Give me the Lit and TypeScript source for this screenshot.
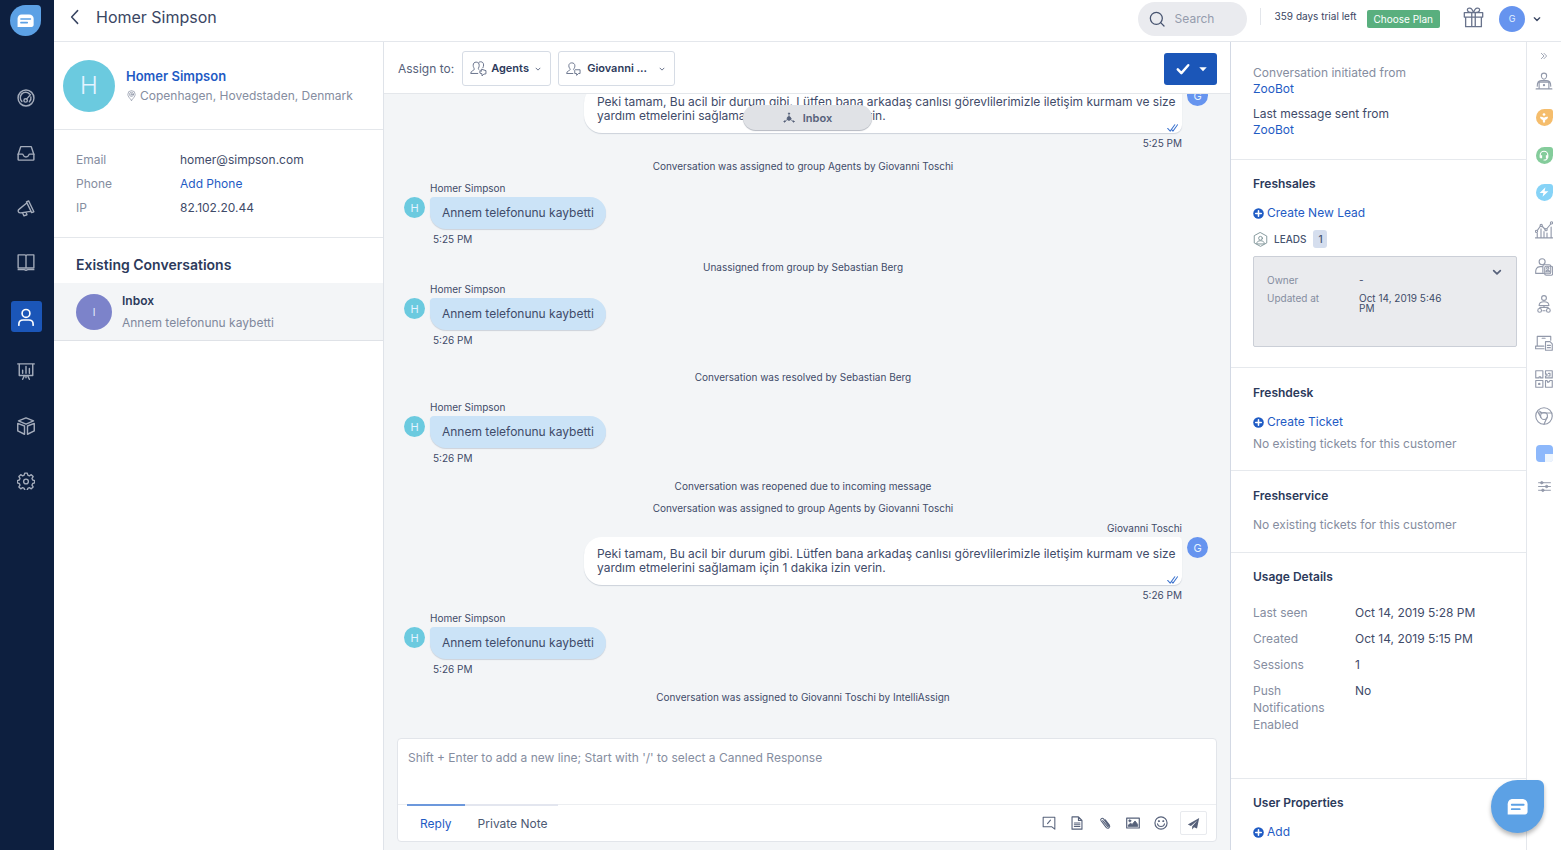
import { LitElement, html, svg, css, nothing } from "lit";
import { customElement, property } from "lit/decorators.js";

const glyphs: Record<string, unknown> = {
  back: svg`<path d="M15.500 3.500 7.500 12l8 8.500" stroke-width="2"/>`,
  pin: svg`<path d="M12 22.500C7.500 17.500 4 13.500 4 9.500a8 8 0 0 1 16 0c0 4-3.500 8-8 13z"/><circle cx="12" cy="9.500" r="4.500"/><circle cx="12" cy="9.500" r="1.500"/>`,
  gauge: svg`<circle cx="12" cy="12" r="10.600" stroke-width="1.900"/><path d="M6.500 16.500A7 7 0 0 1 16.500 6.500M18.500 10.500a7 7 0 0 1-2 6.500" stroke-width="1.900"/><circle cx="11.500" cy="15.200" r="2.300" stroke-width="1.900"/><path d="m13 13.200 5-5.700" stroke-width="1.900"/>`,
  tray: svg`<path d="M1.500 14v6.500a1 1 0 0 0 1 1h19a1 1 0 0 0 1-1V14L19 3.500H5z" stroke-width="1.900"/><path d="M1.500 13.500H7c.6 0 1 .4 1.200 1 .6 1.700 2 2.800 3.800 2.800s3.200-1.100 3.800-2.800c.2-.6.6-1 1.200-1h5.500" stroke-width="1.900"/>`,
  horn: svg`<path d="M15.500 2.500 22.500 17l-3 1.200L12.600 3.800zM13 5.200 3 13.500c-1.300 1-1.700 2.200-1.200 3.400s1.700 1.600 3.200 1.500L18 16.500M7.500 18.500l1.800 4 4-1.500L12 17.500" stroke-width="1.800"/>`,
  book: svg`<path d="M1.500 2.500h9c.9 0 1.500.6 1.500 1.500v16H1.500zM22.500 2.500h-9c-.9 0-1.500.6-1.500 1.500v16h10.500zM1.500 22.200h8l2.500.8 2.500-.8h8" stroke-width="1.800"/>`,
  person: svg`<circle cx="12" cy="7.200" r="5.200" stroke-width="2.200"/><path d="M2.500 23v-1.500c0-3.600 2.600-5.500 5.800-5.500h7.400c3.200 0 5.800 1.900 5.800 5.500V23" stroke-width="2.200"/>`,
  board: svg`<path d="M1 2.500h22M3 2.500V18h18V2.500M10 18l-2.500 5M14 18l2.500 5M12 18v3M7.500 15v-4M12 15V6M16.500 15V8.500" stroke-width="1.900"/>`,
  cube: svg`<path d="m12 1.200 10 4L12 9.500 2 5.200zM1 8.500l9 3.500v11L1 18.500zM23 8.500 14 12v11l9-4.500z" stroke-width="1.900"/>`,
  gear: svg`<path d="M10.300 1.500h3.400l.7 2.700 2.100.9 2.500-1.500 2.500 2.500-1.500 2.500.9 2.100 2.600.7v3.200l-2.600.7-.9 2.100 1.500 2.500-2.500 2.500-2.500-1.500-2.100.9-.7 2.700h-3.400l-.7-2.700-2.100-.9L5 22.400l-2.500-2.500L4 17.400l-.9-2.100-2.600-.7v-3.200l2.600-.7.900-2.100-1.500-2.500L5 3.600l2.500 1.500 2.100-.9z" stroke-width="1.800"/><circle cx="12" cy="12.700" r="3.200" stroke-width="1.800"/>`,
  search: svg`<circle cx="11" cy="11" r="9" stroke-width="1.900"/><path d="m17.500 17.500 5 5" stroke-width="1.900"/>`,
  gift: svg`<path d="M1.500 6.500h21v5h-21zM3 11.500h18v11H3zM10 6.500v16M14 6.500v16M11 6.500C7 6.500 5 5 5 3.200 5 1 8.500.5 10 2.500c.8 1 1.400 2.400 2 4 .6-1.600 1.200-3 2-4 1.500-2 5-1.500 5 .7 0 1.800-2 3.300-6 3.300"/>`,
  chevron: svg`<path d="m4 8.500 8 8 8-8" stroke-width="4"/>`,
  group: svg`<path d="M12.500 13.500c-.9-.5-.9-1.100-.5-2 .6-1.200 1-2.300 1-4 0-3-1.800-4.500-4.300-4.500S4.500 4.500 4.500 7.500c0 2.800 1.500 3.700 1.500 5.500 0 2.200-5 2-5 6h10M12 4c.7-1 1.700-1.500 3-1.500 2.700 0 4.200 1.800 4.200 4.500 0 1.600-.4 2.700-1 4" stroke-width="1.400"/><path d="M16 15.500V13l6.500 2v4.500l-3 .5-2.500 2.500v-3l-3-1v-3z" stroke-width="1.400"/>`,
  agent: svg`<path d="M13 15c-.8-.4-1-1-.7-2 .8-1.300 1.900-2.600 1.900-5.300C14.200 4.500 12 3 9.300 3S4.500 4.500 4.500 7.700c0 3.300 2.200 4.300 2.200 5.800 0 2.200-5.700 2-5.700 6.500h10M15 14h7.500v6H20l-3 3v-3h-3v-4" stroke-width="1.500"/>`,
  check: svg`<path d="m3 12.500 6.200 6.500L21 5.500" stroke-width="4.200"/>`,
  caret: svg`<path d="M3 8h18l-9 9.500z" fill="currentColor" stroke="none"/>`,
  hub: svg`<circle cx="12" cy="13" r="3.800" fill="currentColor"/><path d="M12 10V5M9 15l-4.500 3M15 15l4.500 3"/><circle cx="12" cy="3" r="1.300" fill="currentColor"/><circle cx="3" cy="19" r="1.300" fill="currentColor"/><circle cx="21" cy="19" r="1.300" fill="currentColor"/>`,
  ticks: svg`<path d="m1.500 14 5.500 6L17 6M10.500 17l2.500 3L23 6" stroke-width="2.200"/>`,
  plus: svg`<circle cx="12" cy="12" r="11.500" fill="currentColor" stroke="none"/><path d="M12 6v12M6 12h12" stroke="#fff" stroke-width="3.400"/>`,
  lead: svg`<path d="m12 1 10 5.500v11L12 23 2 17.500v-11z"/><circle cx="12" cy="10" r="3"/><path d="M6 18.500c0-3 2-4.500 6-4.500s6 1.500 6 4.500z"/>`,
  canned: svg`<path d="M2 2h20v20.500L17 18.500H2z" stroke-width="1.800"/><path d="m9.500 13 5-6" stroke-width="1.800"/>`,
  doc: svg`<path d="M3.500 1.500h11l6 6v15h-17zM14.500 1.500v6h6M7.500 12h9.500M7.500 15h9.500M7.500 18h9.500" stroke-width="1.900"/>`,
  clip: svg`<path d="m8 8 8 9.500c1 1.200 2.600-.1 1.700-1.400L9.500 5C7.200 2.200 3.200 5.200 5.200 8.200l8.800 11.300c3 3.600 8-.4 5.300-4.300L12.500 6.500" stroke-width="1.800"/>`,
  image: svg`<path d="M1.200 3.500h21.600v17H1.200z" stroke-width="2"/><circle cx="6.500" cy="8.200" r="1.700" fill="currentColor"/><path d="M4 17.500v-2l4-3 2.500 2 5-6 4.500 6v3z" fill="currentColor"/>`,
  smile: svg`<circle cx="12" cy="12" r="10.400" stroke-width="2"/><path d="M6 13.500c1 6 11 6 12 0" stroke-width="1.800"/><circle cx="8.300" cy="8.800" r=".9" fill="currentColor"/><circle cx="15.700" cy="8.800" r=".9" fill="currentColor"/>`,
  plane: svg`<path d="M22.500 2 1.500 14l5.800 2.500L19 6.500l-9.500 11V23l3.500-4 5.500 2.300z" fill="currentColor" stroke="none"/>`,
  more: svg`<path d="m4 4 8 8-8 8M12 4l8 8-8 8" stroke-width="2.600"/>`,
  laptop: svg`<path d="M12 1.500c2.300 0 3.500 1.500 3.500 3.500S14 9.500 12 9.500 8.500 7 8.500 5 9.700 1.500 12 1.500z"/><path d="M5.500 21.500v-8h13v8M1.500 22.500h21M3 19c0-5 1-7.500 5-7.500h8c4 0 5 2.500 5 7.500"/><circle cx="12" cy="17.500" r=".8" fill="currentColor"/>`,
  sales: svg`<circle cx="12" cy="6" r="2.300" fill="#fff" stroke="none"/><path d="M5 10c3 0 5 .8 7 1.500 2-.7 4-1.500 7-1.500-.5 3-2.500 5-5 5.300V18L12 21l-2-3v-2.700C7.500 15 5.500 13 5 10z" fill="#fff" stroke="none"/>`,
  headset: svg`<path d="M5.500 16v-4a6.500 6.500 0 0 1 13 0v4M12 20.500h3l2.500-2.500" stroke="#fff" stroke-width="2"/><path d="M5.500 12.500h3.300v5H5.500zM15.200 12.500h3.300v5h-3.300z" fill="#fff" stroke="none"/>`,
  bolt: svg`<path d="M14.500 4 4.500 13.500H11L9.500 20l10-9.500H13z" fill="#fff" stroke="none"/>`,
  chart: svg`<path d="M.5 22.500h23M3 22v-6M8 22V10.500M12 22v-8M16 22v-6M21.500 22V8M3.200 12.500 7 7M9.500 7l4 4M16 10l5-6"/><circle cx="8.300" cy="6" r="1.500"/><circle cx="14.700" cy="11.500" r="1.500"/><circle cx="22" cy="2.500" r="1.500"/><circle cx="2" cy="13.800" r="1.500"/>`,
  profile: svg`<circle cx="9.500" cy="5" r="4"/><path d="M10 20.500H1C.5 15 2 11.500 7 11.500h3"/><rect x="10.500" y="9" width="10.500" height="12" rx="2"/><rect x="13" y="11" width="10.500" height="12" rx="2"/><circle cx="17" cy="13.500" r="1.500"/><path d="M14.500 18.500c0-3 5-3 5 0z"/>`,
  people: svg`<circle cx="12" cy="4" r="3.200"/><path d="M5.500 14c0-3.500 2-5 6.500-5s6.500 1.500 6.500 5zM12 14v2.500M6.500 18v-1.500h11V18"/><circle cx="6.200" cy="20.500" r="2.500"/><circle cx="17.800" cy="20.500" r="2.500"/><path d="M10.500 21h3"/>`,
  device: svg`<path d="M3 17.500v-13h18v5M.8 17.500h11M.8 17.500V21H12M9.500 7h4M14 11.500h6l3 3v8.500h-9zM16.500 16.500h4M16.500 19.500h4"/>`,
  puzzle: svg`<path d="M1 1h9.500v9.500H7.500V9h-2v1.500H1zM14 1h9v9.500h-9V8h2V5.500h-2zM18 4.500h2V8h-2M1 14h9.500v9H1zM14 14h2l1 2.500 2-1L20 14h3v9h-9z"/><circle cx="5.700" cy="18.500" r=".9" fill="currentColor"/>`,
  chrome: svg`<circle cx="12" cy="12" r="11"/><circle cx="12" cy="12" r="4.600"/><path d="M9.500 8h12.700M8 14 3.300 5.500M16 14l-4 9M6 5.500l3.500 2.500M9.500 8H5"/>`,
  sliders: svg`<path d="M1 5h22M1 12h22M1 19h22" stroke-width="1.800"/><circle cx="7" cy="5" r="2.300" fill="currentColor"/><circle cx="16" cy="12" r="2.300" fill="currentColor"/><circle cx="9" cy="19" r="2.300" fill="currentColor"/>`,
  bubble: svg`<path d="M6.500 3.500h10.500c4 0 6.500 2.500 6.500 6v8.500c0 1.700-1 3-3 3H.8V9.500c0-3.500 2.200-6 5.700-6z" fill="#fff" stroke="none"/><path d="M5.500 10h13.500M5.500 15h9" stroke="#5ca1e5" stroke-width="2.200"/>`,
};

const icon = (name: string, size: number) => html`<svg
  width=${size} height=${size} viewBox="0 0 24 24" fill="none" stroke="currentColor"
  stroke-width="1.500" stroke-linecap="round" stroke-linejoin="round" aria-hidden="true"
>${glyphs[name]}</svg>`;

const base = css`
  * { box-sizing: border-box; }
  svg { display: block; flex: none; }
  button { font: inherit; color: inherit; background: none; border: 0; padding: 0; margin: 0; cursor: pointer; }
  button, .center { display: grid; place-items: center; }
  a { color: #1f5bc4; text-decoration: none; }
  h1, h2, h3, p, dl, dd, ul { margin: 0; padding: 0; }
  .avatar { display: grid; place-items: center; flex: none; border-radius: 50%; color: #e4f3ff; }
`;

@customElement("nav-rail")
class NavRail extends LitElement {
  static styles = [base, css`
    :host { display: block; background: #0d1f3f; color: #a4acbb; padding-top: 5px; }
    .logo { width: 31px; height: 31px; margin: 0 auto 35px 10px; background: #5ca1e5; border-radius: 50% 4px 50% 50%; }
    .items { display: grid; grid-auto-rows: 1fr; height: 437px; justify-items: center; align-items: center; padding-left: 1px; padding-right: 3px; }
    .items button { width: 31px; height: 31px; border-radius: 3px; }
    .items .active { background: #1b56b8; color: #fff; }
  `];
  render() {
    const items = [["gauge", "Dashboard"], ["tray", "Inbox"], ["horn", "Campaigns"], ["book", "FAQs"], ["person", "People"], ["board", "Reports"], ["cube", "Apps"], ["gear", "Settings"]];
    return html`<div class="logo center">${icon("bubble", 17)}</div>
      <nav class="items">${items.map(([g, label]) => html`
        <button class=${g === "person" ? "active" : ""} aria-label=${label}>${icon(g, 18)}</button>`)}</nav>`;
  }
}

@customElement("top-bar")
class TopBar extends LitElement {
  static styles = [base, css`
    :host { display: flex; align-items: center; height: 42px; border-bottom: 1px solid #e4e7ec; padding: 0 20px 8px 12px; color: #3a4663; }
    h1 { font-size: 16px; font-weight: 400; margin-left: 12px; flex: 1; }
    .search { display: flex; align-items: center; gap: 10px; width: 109px; height: 34px; border-radius: 17px; background: #eaebef; padding-left: 11px; margin-top: 4px; color: #46536f; }
    .search input { font: inherit; font-size: 12px; border: 0; background: none; padding: 0; width: 60px; outline: 0; color: inherit; }
    .search input::placeholder { color: #959cad; opacity: 1; }
    .trial { border-left: 1px solid #e3e6eb; margin-left: 13px; padding-left: 14px; font-size: 10px; line-height: 17px; }
    .plan { background: #59af7e; color: #fff; border-radius: 2px; height: 18px; padding: 0 7px; margin: 4px 23px 0 10px; font-size: 10px; }
    .gift { color: #69738c; margin-top: 2px; }
    .avatar { width: 26px; height: 26px; font-size: 9px; background: #6694ef; margin: 4px 8px 0 15px; }
    .account { margin-top: 4px; }
  `];
  render() {
    return html`<button aria-label="Back">${icon("back", 18)}</button>
      <h1>Homer Simpson</h1>
      <label class="search">${icon("search", 16)}<input type="search" placeholder="Search" aria-label="Search" /></label>
      <span class="trial">359 days trial left</span>
      <button class="plan">Choose Plan</button>
      <button class="gift" aria-label="What's new">${icon("gift", 21)}</button>
      <span class="avatar">G</span>
      <button class="account" aria-label="Account menu">${icon("chevron", 8)}</button>`;
  }
}

@customElement("contact-panel")
class ContactPanel extends LitElement {
  static styles = [base, css`
    :host { display: block; border-right: 1px solid #dfe3e9; background: #fff; font-size: 12px; color: #3f4b69; }
    .head { display: flex; align-items: center; gap: 11px; height: 88px; padding: 0 9px; border-bottom: 1px solid #e4e7eb; }
    .head .avatar { width: 52px; height: 52px; background: #6bcadf; font-size: 24px; font-weight: 300; }
    h2 { font-size: 13px; font-weight: 600; line-height: 20px; }
    .place { display: flex; align-items: center; gap: 3px; color: #858da0; line-height: 20px; }
    .facts { display: grid; grid-template-columns: 104px 1fr; height: 108px; padding: 18px 22px 0; grid-auto-rows: 24px; align-items: center; border-bottom: 1px solid #e4e7eb; }
    dt { color: #858da0; }
    h3 { font-size: 14px; font-weight: 600; line-height: 45px; padding: 4px 22px 0; height: 45px; color: #2c3a5b; }
    .row { display: flex; align-items: center; gap: 10px; height: 58px; padding: 0 22px; background: #f3f5f7; border-bottom: 1px solid #dfe2e7; color: inherit; }
    .row .avatar { width: 36px; height: 36px; background: #7c83ca; font-size: 10px; }
    .row b { display: block; font-weight: 600; line-height: 22px; color: #2c3a5b; }
    .row span span { color: #7f889c; line-height: 22px; }
    .facts dd, .facts dt { line-height: 24px; }
  `];
  render() {
    return html`<div class="head"><span class="avatar">H</span><div>
        <h2><a href="#contact">Homer Simpson</a></h2>
        <p class="place">${icon("pin", 11)}Copenhagen, Hovedstaden, Denmark</p></div></div>
      <dl class="facts"><dt>Email</dt><dd>homer@simpson.com</dd>
        <dt>Phone</dt><dd><a href="#phone">Add Phone</a></dd>
        <dt>IP</dt><dd>82.102.20.44</dd></dl>
      <h3>Existing Conversations</h3>
      <a class="row" href="#inbox"><span class="avatar">I</span><span><b>Inbox</b><span>Annem telefonunu kaybetti</span></span></a>`;
  }
}

interface Entry { kind: "in" | "out" | "event"; text: string; time?: string; wide?: boolean }

const LONG = "Peki tamam, Bu acil bir durum gibi. Lütfen bana arkadaş canlısı görevlilerimizle iletişim kurmam ve size yardım etmelerini sağlamam için 1 dakika izin verin.";
const LOST = "Annem telefonunu kaybetti";
const entries: Entry[] = [
  { kind: "out", text: LONG, time: "5:25 PM" },
  { kind: "event", text: "Conversation was assigned to group Agents by Giovanni Toschi" },
  { kind: "in", text: LOST, time: "5:25 PM" },
  { kind: "event", text: "Unassigned from group by Sebastian Berg" },
  { kind: "in", text: LOST, time: "5:26 PM" },
  { kind: "event", text: "Conversation was resolved by Sebastian Berg", wide: true },
  { kind: "in", text: LOST, time: "5:26 PM" },
  { kind: "event", text: "Conversation was reopened due to incoming message" },
  { kind: "event", text: "Conversation was assigned to group Agents by Giovanni Toschi" },
  { kind: "out", text: LONG, time: "5:26 PM" },
  { kind: "in", text: LOST, time: "5:26 PM" },
  { kind: "event", text: "Conversation was assigned to Giovanni Toschi by IntelliAssign" },
];

@customElement("chat-entry")
class ChatEntry extends LitElement {
  @property({ attribute: false }) entry!: Entry;
  static styles = [base, css`
    :host { display: block; flex: none; font-size: 12px; color: #3f4b69; }
    .event { text-align: center; font-size: 10px; line-height: 22px; padding-right: 8px; }
    .wide { padding: 9px 8px 8px 0; }
    .in, .out { display: grid; column-gap: 5px; }
    .in { grid-template-columns: 21px auto; justify-content: start; padding: 3px 0 7px 20px; }
    .out { grid-template-columns: minmax(0, 598px) 21px; justify-content: end; justify-items: end; padding: 1px 22px 2px 0; }
    .in .name, .in .bubble, .in time { grid-column: 2; }
    .out .name, .out .bubble, .out time { grid-column: 1; }
    .name { font-size: 10px; line-height: 17px; }
    time { font-size: 10px; line-height: 20px; }
    .in time { padding-left: 3px; }
    .avatar { width: 21px; height: 21px; font-size: 11px; grid-row: 2; }
    .in .avatar { background: #6bcadf; grid-column: 1; }
    .out .avatar { background: #6694ef; grid-column: 2; }
    .bubble { position: relative; line-height: 14px; box-shadow: 0 1px 1px #ccd2da; }
    .in .bubble { background: #cbe3f7; border-radius: 4px 16px 16px 16px; padding: 9px 12px; justify-self: start; }
    .out .bubble { background: #fff; border-radius: 18px 4px 8px 18px; padding: 10px 5px 10px 13px; }
    .seen { position: absolute; right: 4px; bottom: 0; color: #3d74cf; }
  `];
  render() {
    const e = this.entry;
    if (e.kind === "event") return html`<p class="event ${e.wide ? "wide" : ""}">${e.text}</p>`;
    const out = e.kind === "out";
    return html`<div class=${e.kind}>
      <span class="name">${out ? "Giovanni Toschi" : "Homer Simpson"}</span>
      <span class="avatar">${out ? "G" : "H"}</span>
      <p class="bubble">${e.text}${out ? html`<span class="seen">${icon("ticks", 11)}</span>` : nothing}</p>
      <time>${e.time}</time></div>`;
  }
}

@customElement("chat-panel")
class ChatPanel extends LitElement {
  static styles = [base, css`
    :host { display: flex; flex-direction: column; min-width: 0; min-height: 0; background: #f3f5f7; font-size: 12px; color: #3f4b69; }
    .bar { display: flex; align-items: center; height: 52px; flex: none; background: #fff; padding: 2px 13px 0 14px; border-bottom: 1px solid #e4e7eb; }
    .bar > span { color: #56617a; margin-right: 8px; }
    .pick { display: flex; align-items: center; height: 35px; border: 1px solid #d6dce5; border-radius: 3px; margin-right: 7px; padding: 0 9px 0 7px; color: #69738c; }
    .pick select { appearance: none; font: inherit; font-size: 11px; font-weight: 600; border: 0; background: none; padding: 0 6px 2px 4px; margin: 0; color: #2c3a5b; outline: 0; }
    .pick.agent select { padding-right: 12px; padding-left: 6px; }
    .resolve { display: flex; margin-left: auto; background: #1b56b8; border-radius: 3px; color: #fff; height: 32px; }
    .resolve button { padding: 0 4px; height: 32px; }
    .resolve button:first-child { padding-left: 12px; }
    .resolve button:last-child { padding-right: 9px; }
    .stream { position: relative; flex: 1; min-height: 0; overflow: hidden; display: flex; flex-direction: column; justify-content: flex-end; padding-bottom: 30px; }
    .tag { position: absolute; top: 11px; left: 50%; margin-left: -64px; width: 129px; height: 25px; border-radius: 13px; background: #e0e2e6; box-shadow: 0 1px 1px #b5b9c1; display: flex; align-items: center; justify-content: center; gap: 8px; font-size: 11px; font-weight: 600; color: #56617a; }
    .composer { margin: 0 13px 8px; border: 1px solid #e2e5ea; border-radius: 4px; background: #fff; flex: none; }
    textarea { display: block; width: 100%; height: 65px; border: 0; padding: 11px 10px; resize: none; font: inherit; line-height: 15px; outline: 0; background: none; color: inherit; }
    textarea::placeholder { color: #858da0; opacity: 1; }
    .tools { display: flex; align-items: center; height: 37px; border-top: 1px solid #eceef1; padding: 0 9px; color: #56617a; }
    .tab { height: 37px; margin-top: -2px; border-top: 2px solid #e3e6ef; color: #4d5973; padding: 0 10px 0 13px; }
    .tab.on { border-color: #6c98dc; color: #1f5bc4; padding: 0 13px; }
    .acts { display: flex; align-items: center; margin-left: auto; gap: 14px; }
    .send { width: 27px; height: 24px; border: 1px solid #e8eaee; border-radius: 2px; margin-left: -2px; }
  `];
  render() {
    return html`<div class="bar"><span>Assign to:</span>
        <label class="pick">${icon("group", 17)}<select aria-label="Group"><option>Agents</option></select>${icon("chevron", 6)}</label>
        <label class="pick agent">${icon("agent", 15)}<select aria-label="Agent"><option>Giovanni ...</option></select>${icon("chevron", 6)}</label>
        <div class="resolve"><button aria-label="Resolve">${icon("check", 14)}</button><button aria-label="More">${icon("caret", 10)}</button></div></div>
      <div class="stream">${entries.map((e) => html`<chat-entry .entry=${e}></chat-entry>`)}
        <div class="tag">${icon("hub", 12)}Inbox</div></div>
      <form class="composer"><textarea aria-label="Message" placeholder="Shift + Enter to add a new line; Start with '/' to select a Canned Response"></textarea>
        <div class="tools"><button type="button" class="tab on">Reply</button><button type="button" class="tab">Private Note</button>
          <div class="acts">
            ${[["canned", "Canned response"], ["doc", "FAQ"], ["clip", "Attach"], ["image", "Image"], ["smile", "Emoji"]].map(([g, l]) => html`<button type="button" aria-label=${l}>${icon(g, 14)}</button>`)}
            <button type="button" class="send" aria-label="Send">${icon("plane", 13)}</button></div></div></form>`;
  }
}

@customElement("detail-panel")
class DetailPanel extends LitElement {
  static styles = [base, css`
    :host { display: block; min-height: 0; overflow: hidden; border-left: 1px solid #d3d9e4; font-size: 12px; color: #3f4b69; background: #fff; }
    section { padding: 16px 9px 0 22px; border-bottom: 1px solid #e6e9ed; }
    section:last-child { border: 0; }
    h2 { font-size: 12px; font-weight: 600; line-height: 17px; color: #2c3a5b; }
    .source { height: 118px; padding-top: 23px; line-height: 16px; }
    .source p + p { margin-top: 9px; }
    .source a { display: block; }
    .muted, dt { color: #858da0; }
    .add { display: flex; align-items: center; gap: 3px; line-height: 18px; margin-top: 12px; }
    .sales { height: 208px; padding-top: 15px; }
    .leads { display: flex; align-items: center; height: 18px; margin-top: 8px; font-size: 10px; font-weight: 500; color: #46536f; }
    .leads svg { color: #7f9499; margin-right: 6px; }
    .leads b { background: #d5deee; border-radius: 3px; width: 14px; line-height: 18px; text-align: center; margin-left: 7px; font-weight: 500; }
    .card { position: relative; height: 91px; margin-top: 8px; border: 1px solid #cbcfd7; border-radius: 2px; background: #eaebee; padding: 14px 13px; display: grid; grid-template-columns: 92px 96px; align-content: start; font-size: 10px; }
    .card dt { line-height: 18px; }
    .card dd { line-height: 18px; }
    .card .date { line-height: 10px; padding-top: 4px; }
    .card button { position: absolute; top: 10px; right: 14px; color: #56617a; }
    .desk { height: 103px; }
    .desk p { margin-top: 4px; line-height: 18px; }
    .service { height: 82px; }
    .service p { margin-top: 12px; line-height: 18px; }
    .usage { height: 226px; padding-top: 15px; }
    .usage dl { display: grid; grid-template-columns: 82px 1fr; column-gap: 20px; row-gap: 9px; line-height: 17px; margin-top: 19px; }
    .props { padding-top: 15px; }
  `];
  render() {
    return html`<section class="source"><p><span class="muted">Conversation initiated from</span><a href="#bot">ZooBot</a></p>
        <p>Last message sent from<a href="#bot">ZooBot</a></p></section>
      <section class="sales"><h2>Freshsales</h2><a class="add" href="#lead">${icon("plus", 11)}Create New Lead</a>
        <div class="leads">${icon("lead", 15)}LEADS<b>1</b></div>
        <dl class="card"><dt>Owner</dt><dd>-</dd><dt>Updated at</dt><dd class="date">Oct 14, 2019 5:46 PM</dd><button aria-label="Expand lead">${icon("chevron", 10)}</button></dl></section>
      <section class="desk"><h2>Freshdesk</h2><a class="add" href="#ticket">${icon("plus", 11)}Create Ticket</a><p class="muted">No existing tickets for this customer</p></section>
      <section class="service"><h2>Freshservice</h2><p class="muted">No existing tickets for this customer</p></section>
      <section class="usage"><h2>Usage Details</h2><dl><dt>Last seen</dt><dd>Oct 14, 2019 5:28 PM</dd><dt>Created</dt><dd>Oct 14, 2019 5:15 PM</dd><dt>Sessions</dt><dd>1</dd><dt>Push Notifications Enabled</dt><dd>No</dd></dl></section>
      <section class="props"><h2>User Properties</h2><a class="add" href="#property">${icon("plus", 11)}Add</a></section>`;
  }
}

@customElement("app-rail")
class AppRail extends LitElement {
  static styles = [base, css`
    :host { display: block; border-left: 1px solid #e4e7ec; color: #9299aa; background: #fff; padding-top: 7px; }
    .more { width: 100%; height: 13px; }
    .items { display: grid; grid-auto-rows: 1fr; height: 410px; justify-items: center; }
    .items button { width: 18px; height: 100%; }
    .tuner { width: 100%; height: 28px; }
    .drop { display: grid; place-items: center; width: 17px; height: 17px; border-radius: 50% 3px 50% 50%; }
    .sales { background: #f5bd6c; }
    .headset { background: #84cc9b; }
    .bolt { background: #86d3f7; }
    .tile { display: grid; place-items: end; width: 17px; height: 17px; border-radius: 4px; background: #8db8fb; }
    .tile::after { content: ""; width: 8px; height: 8px; border-radius: 0 0 3px 0; background: #eef5fd; }
  `];
  render() {
    const items = ["laptop", "sales", "headset", "bolt", "chart", "profile", "people", "device", "puzzle", "chrome", "tile"];
    return html`<button class="more" aria-label="Collapse">${icon("more", 8)}</button>
      <div class="items">${items.map((g) => html`<button aria-label=${g}>${
        g === "tile" ? html`<span class="tile"></span>`
        : ["sales", "headset", "bolt"].includes(g) ? html`<span class="drop ${g}">${icon(g, 14)}</span>`
        : icon(g, 18)}</button>`)}</div>
      <button class="tuner" aria-label="Customise">${icon("sliders", 13)}</button>`;
  }
}

@customElement("app-root")
class AppRoot extends LitElement {
  static styles = [base, css`
    :host { display: grid; grid-template: auto minmax(0, 1fr) / 54px 330px minmax(0, 1fr) 296px 35px; height: 100vh; overflow: hidden; background: #fff; font-family: Inter, "Liberation Sans", sans-serif; }
    nav-rail { grid-row: 1 / 3; }
    top-bar { grid-column: 2 / 6; }
    .launcher { position: fixed; right: 17px; bottom: 17px; width: 53px; height: 53px; border-radius: 50% 6px 50% 50%; background: #5ca1e5; box-shadow: 0 3px 4px rgba(0, 0, 0, 0.28); }
  `];
  render() {
    return html`<nav-rail></nav-rail><top-bar></top-bar><contact-panel></contact-panel><chat-panel></chat-panel>
      <detail-panel></detail-panel><app-rail></app-rail>
      <button class="launcher" aria-label="Open chat">${icon("bubble", 21)}</button>`;
  }
}
